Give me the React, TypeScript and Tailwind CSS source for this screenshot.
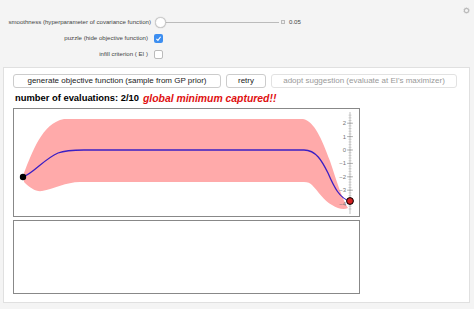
import React from 'react';

const font = { fontFamily: '"Liberation Sans", Arial, sans-serif' };

const ticks = Array.from({ length: 36 }, (_, i) => 2.6 - i * 0.2);
const labels = [2, 1, 0, -1, -2, -3, -4];
const yOf = (v: number) => 41 - v * 13.4;

const Plot: React.FC = () => (
    <svg width="345" height="107" viewBox="0 0 345 107">
        <path
            d="M10,64 C18,44 28,14 50,10 L289,10 C300,12 308,30 316,52 C322,70 328,90 334,99 C330,101 324,100 318,96 C310,92 304,82 298,76 C296,74 294,73 290,73 L66,73 C52,73 40,80 28,82 C22,83 16,79 10,73 Z"
            fill="#ffaaaa"
        />
        <path
            d="M9,68 C20,64 30,50 44,44 C52,41 60,41 70,41 L290,41 C302,41 308,52 314,64 C320,78 326,90 336,92"
            fill="none"
            stroke="#3b1fc4"
            strokeWidth="1.3"
        />
        <line x1="336" y1="3" x2="336" y2="105" stroke="#999" strokeWidth="0.6" />
        {ticks.map((v) => (
            <line key={v} x1="334.5" x2="337.5" y1={yOf(v)} y2={yOf(v)} stroke="#aaa" strokeWidth="0.5" />
        ))}
        {labels.map((v) => (
            <g key={v}>
                <line x1="333" x2="339" y1={yOf(v)} y2={yOf(v)} stroke="#888" strokeWidth="0.6" />
                <text
                    x="332"
                    y={yOf(v) + 2}
                    textAnchor="end"
                    fontSize="6"
                    fill="#777"
                    fontFamily='"Liberation Sans", Arial, sans-serif'
                >
                    {v < 0 ? `\u2212${-v}` : v}
                </text>
            </g>
        ))}
        <circle cx="9" cy="68" r="3.2" fill="#000" />
        <circle cx="336" cy="92" r="3.4" fill="#d42020" stroke="#000" strokeWidth="1" />
    </svg>
);

export default function App() {
    return (
        <div className="relative w-[474px] h-[309px] bg-[#f4f4f4] text-[#333]" style={font}>
            <svg className="absolute top-[7px] right-[4px]" width="7" height="7" viewBox="0 0 10 10">
                <circle cx="5" cy="5" r="3" fill="none" stroke="#bbb" strokeWidth="1.6" />
                <circle cx="5" cy="5" r="4.4" fill="none" stroke="#ccc" strokeWidth="1" strokeDasharray="1.4 1.4" />
            </svg>

            <div className="flex flex-col pt-[14px]">
                <div className="flex items-center h-[16px]">
                    <span className="w-[151px] text-right text-[6.1px] text-[#444]">
                        smoothness (hyperparameter of covariance function)
                    </span>
                    <div className="relative ml-[4px] flex items-center w-[124px] h-[12px]">
                        <div className="absolute left-[5px] right-0 h-px bg-[#bbb]" />
                        <div className="absolute left-0 w-[11px] h-[11px] rounded-full bg-white border border-[#ccc] shadow-[0_0_1px_rgba(0,0,0,0.3)]" />
                    </div>
                    <div className="ml-[2px] w-[4px] h-[4px] border border-[#bbb] bg-[#eee]" />
                    <span className="ml-[4px] text-[6.1px] text-[#444]">0.05</span>
                </div>
                <div className="flex items-center h-[16px]">
                    <span className="w-[148px] text-right text-[6.1px] text-[#444]">
                        puzzle (hide objective function)
                    </span>
                    <div className="ml-[6px] w-[9px] h-[9px] rounded-[2px] bg-[#3d8ef0] flex items-center justify-center">
                        <svg width="7" height="7" viewBox="0 0 10 10">
                            <path d="M2,5.5 L4.2,7.6 L8,2.5" fill="none" stroke="#fff" strokeWidth="1.6" />
                        </svg>
                    </div>
                </div>
                <div className="flex items-center h-[16px]">
                    <span className="w-[148px] text-right text-[6.1px] text-[#444]">infill criterion ( EI )</span>
                    <div className="ml-[6px] w-[9px] h-[9px] rounded-[2px] bg-white border border-[#bbb]" />
                </div>
            </div>

            <div className="mt-[5px] ml-[3px] w-[467px] h-[236px] bg-white border border-[#e0e0e0] pl-[9px] pt-[6px]">
                <div className="flex items-center gap-[5px]">
                    <button className="w-[208px] h-[14px] rounded-[3px] border border-[#ccc] bg-white text-[8px] text-[#222] leading-none">
                        generate objective function (sample from GP prior)
                    </button>
                    <button className="w-[40px] h-[14px] rounded-[3px] border border-[#ccc] bg-white text-[8px] text-[#222] leading-none">
                        retry
                    </button>
                    <button className="w-[186px] h-[14px] rounded-[3px] border border-[#e2e2e2] bg-white text-[8px] text-[#999] leading-none">
                        adopt suggestion (evaluate at EI's maximizer)
                    </button>
                </div>
                <div className="mt-[4px] ml-[2px] h-[13px] flex items-center font-bold text-black">
                    <span className="text-[9.4px]">number of evaluations: 2/10</span>
                    <span className="ml-[4px] text-[10.4px] italic text-[#e01010]">global minimum captured!!</span>
                </div>
                <div className="mt-[3px] w-[347px] h-[109px] border border-[#888] bg-white">
                    <Plot />
                </div>
                <div className="mt-[3px] w-[347px] h-[74px] border border-[#888] bg-white" />
            </div>
        </div>
    );
}
